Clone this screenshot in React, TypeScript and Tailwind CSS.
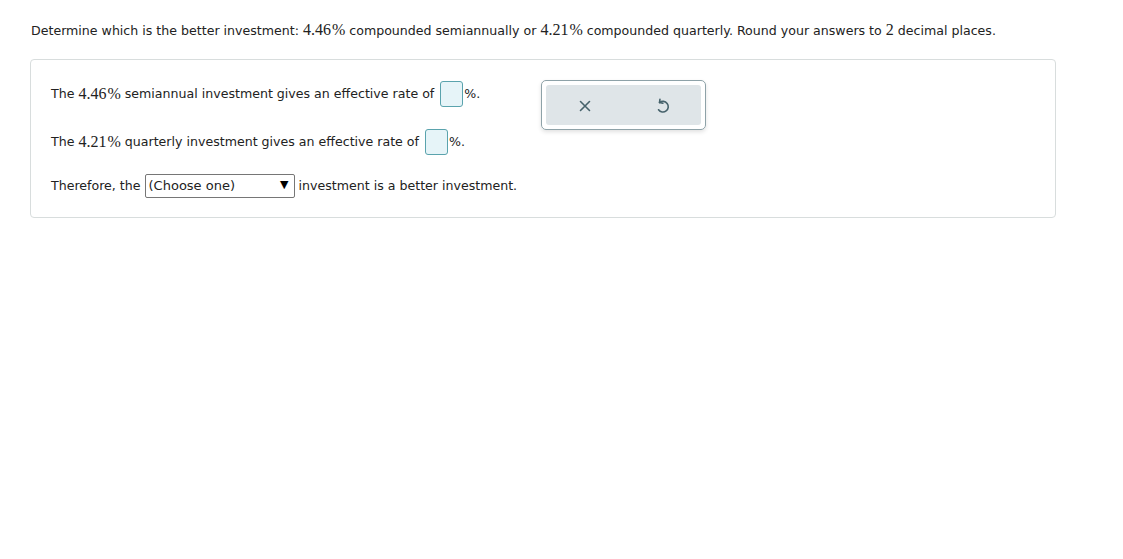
import { useState } from "react"

function Num({ value, pct }: { value: string; pct?: boolean }) {
  return (
    <span className="font-['Liberation_Serif',serif] text-[16px]">
      {value}
      {pct && <span className="ml-[1px]">%</span>}
    </span>
  )
}

function AnswerBox() {
  return (
    <span className="mx-[6px] inline-block h-[26px] w-[23px] rounded-[3px] border border-[#5aa3ad] bg-[#e6f4f8] align-middle" />
  )
}

export default function App() {
  const [choice, setChoice] = useState("")

  return (
    <div className="min-h-[559px] w-[1123px] bg-white font-['DejaVu_Sans',Verdana,sans-serif] text-[12.6px] text-[#222]">
      <p className="whitespace-nowrap pl-[31px] pt-[20px] leading-[20px]">
        Determine which is the better investment: <Num value="4.46" pct /> compounded semiannually or{" "}
        <Num value="4.21" pct /> compounded quarterly. Round your answers to <Num value="2" /> decimal places.
      </p>

      <div className="ml-[30px] mt-[18px] flex w-[1026px] gap-[20px] rounded-[4px] border border-[#d8dddd] px-[20px] pb-[18px] pt-[20px]">
        <div className="w-[470px] whitespace-nowrap pt-[1px]">
          <div className="flex h-[26px] items-center">
            The&nbsp;<Num value="4.46" pct />&nbsp;semiannual investment gives an effective rate of
            <AnswerBox />
            <span className="-ml-[5px]">%.</span>
          </div>
          <div className="mt-[22px] flex h-[26px] items-center">
            The&nbsp;<Num value="4.21" pct />&nbsp;quarterly investment gives an effective rate of
            <AnswerBox />
            <span className="-ml-[5px]">%.</span>
          </div>
          <div className="mt-[18px] flex h-[26px] items-center">
            <span>Therefore, the</span>
            <div className="relative mx-[4px] h-[24px] w-[150px] shrink-0">
              <select
                value={choice}
                onChange={(e) => setChoice(e.target.value)}
                className="h-full w-full appearance-none rounded-[2px] border border-[#767676] bg-white pl-[3px] text-[13px] text-[#222]"
              >
                <option value="">(Choose one)</option>
                <option value="semiannual">semiannual</option>
                <option value="quarterly">quarterly</option>
              </select>
              <span className="pointer-events-none absolute right-[6px] top-[4px] text-[11px] leading-[14px] text-black">▼</span>
            </div>
            <span>investment is a better investment.</span>
          </div>
        </div>

        <div className="h-[50px] w-[165px] shrink-0 rounded-[5px] border border-[#8ea2a8] p-[4px] shadow-[0_2px_4px_rgba(0,0,0,0.12)]">
          <div className="flex h-full items-center rounded-[3px] bg-[#dfe5e8]">
            <button type="button" className="flex flex-1 justify-center pt-[1px]">
              <svg width="12" height="12" viewBox="0 0 12 12" fill="none" stroke="#46626b" strokeWidth="1.6" strokeLinecap="round">
                <path d="M1.5 1.5 L10.5 10.5 M10.5 1.5 L1.5 10.5" />
              </svg>
            </button>
            <button type="button" className="flex flex-1 justify-center pt-[2px]">
              <svg width="15" height="16" viewBox="0 0 14 15" fill="none" stroke="#46626b" strokeWidth="1.5" strokeLinecap="round" strokeLinejoin="round">
                <path d="M4.2 4.3 A5 5 0 1 1 3.3 11" />
                <path d="M4.6 1.2 L4.2 4.3 L7.3 4.9" />
              </svg>
            </button>
          </div>
        </div>
      </div>
    </div>
  )
}
